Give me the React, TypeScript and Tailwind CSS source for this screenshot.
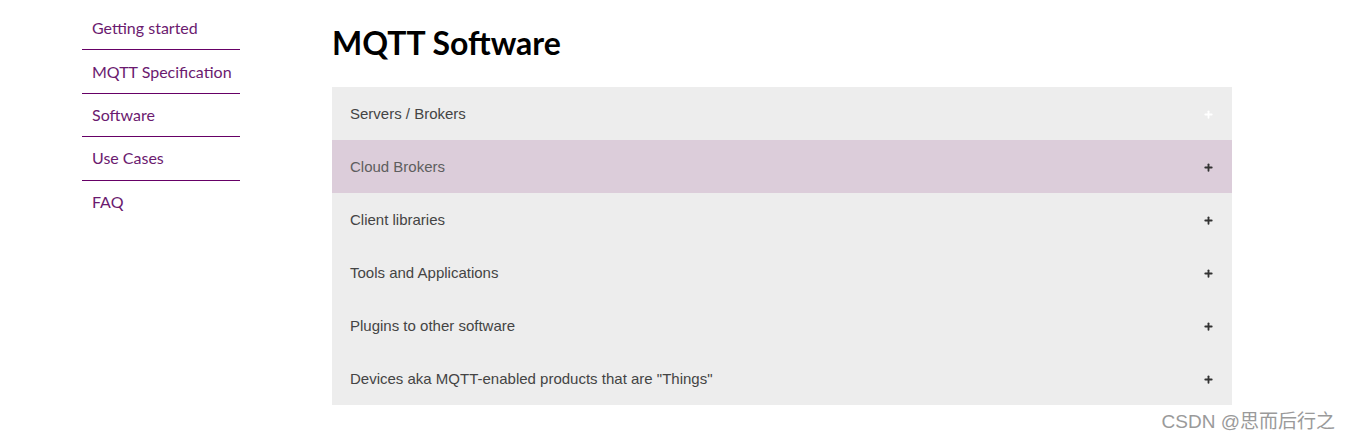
import { Plus } from "lucide-react";

const NAV = ["Getting started", "MQTT Specification", "Software", "Use Cases", "FAQ"];

const SECTIONS = [
  { title: "Servers / Brokers", active: false, light: true },
  { title: "Cloud Brokers", active: true, light: false },
  { title: "Client libraries", active: false, light: false },
  { title: "Tools and Applications", active: false, light: false },
  { title: "Plugins to other software", active: false, light: false },
  { title: 'Devices aka MQTT-enabled products that are "Things"', active: false, light: false },
];

const App = () => {
  return (
    <div className="relative w-[1350px] h-[441px] bg-white overflow-hidden">
      <div className="flex pl-[82px]">
        {/* SIDEBAR */}
        <nav className="w-[158px] pt-[7px] font-['Lato',sans-serif] text-[16px] text-[#6b1a6f]">
          {NAV.map((item, i) => (
            <div
              key={item}
              className={`h-[43.4px] flex items-center pl-[10px] ${
                i < NAV.length - 1 ? "border-b border-[#660066]" : ""
              }`}
            >
              {item}
            </div>
          ))}
        </nav>

        {/* CONTENT */}
        <main className="ml-[92px] w-[900px]">
          <h1 className="font-['Lato',sans-serif] font-bold text-[32px] leading-[41px] text-black mt-[22px] mb-[24px]">
            MQTT Software
          </h1>

          <div className="font-['Liberation_Sans',Arial,sans-serif] text-[15px]">
            {SECTIONS.map((s) => (
              <div
                key={s.title}
                className={`h-[53px] flex items-center justify-between pt-[2px] pl-[18px] pr-[18px] ${
                  s.active ? "bg-[#dccdda] text-[#5e5e5e]" : "bg-[#ededed] text-[#444]"
                }`}
              >
                <span>{s.title}</span>
                <Plus
                  size={11}
                  strokeWidth={4}
                  className={s.light ? "text-white" : "text-[#333]"}
                />
              </div>
            ))}
          </div>
        </main>
      </div>

      <div className="absolute right-[15px] top-[408px] font-['Liberation_Sans','Noto_Sans_CJK_SC',sans-serif] text-[19px] text-[#9a9a9a]">
        CSDN @思而后行之
      </div>
    </div>
  );
};

export default App;
